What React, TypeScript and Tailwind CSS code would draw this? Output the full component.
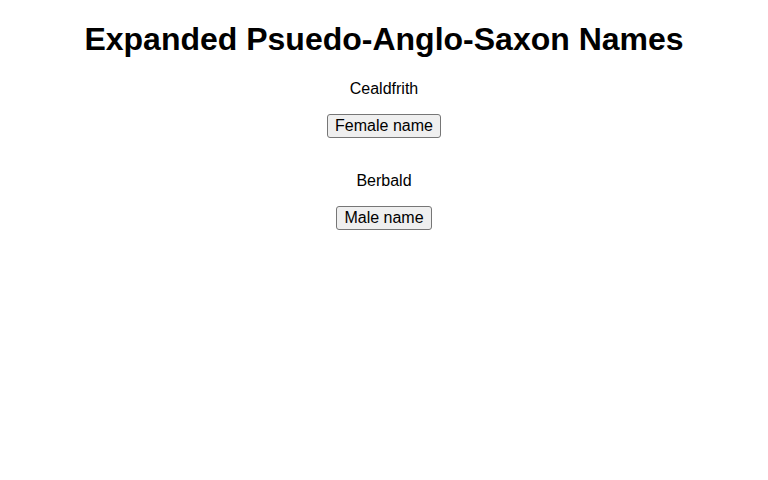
import React from "react";

const NAMES = [
  { name: "Cealdfrith", label: "Female name" },
  { name: "Berbald", label: "Male name" },
];

const App: React.FC = () => {
  return (
    <div className="min-h-[480px] bg-white text-center font-['Liberation_Sans',Arial,sans-serif] text-black">
      <h1 className="pt-[21px] text-[32px] font-bold leading-[37px]">
        Expanded Psuedo-Anglo-Saxon Names
      </h1>

      <div className="mt-[22px] flex flex-col items-center gap-[34px]">
        {NAMES.map((n) => (
          <div key={n.label} className="flex flex-col items-center gap-4">
            <p className="text-base leading-[18px]">{n.name}</p>
            <button className="rounded-[3px] border border-[#767676] bg-[#efefef] px-[7px] py-[2px] text-base leading-[18px] text-black">
              {n.label}
            </button>
          </div>
        ))}
      </div>
    </div>
  );
};

export default App;
